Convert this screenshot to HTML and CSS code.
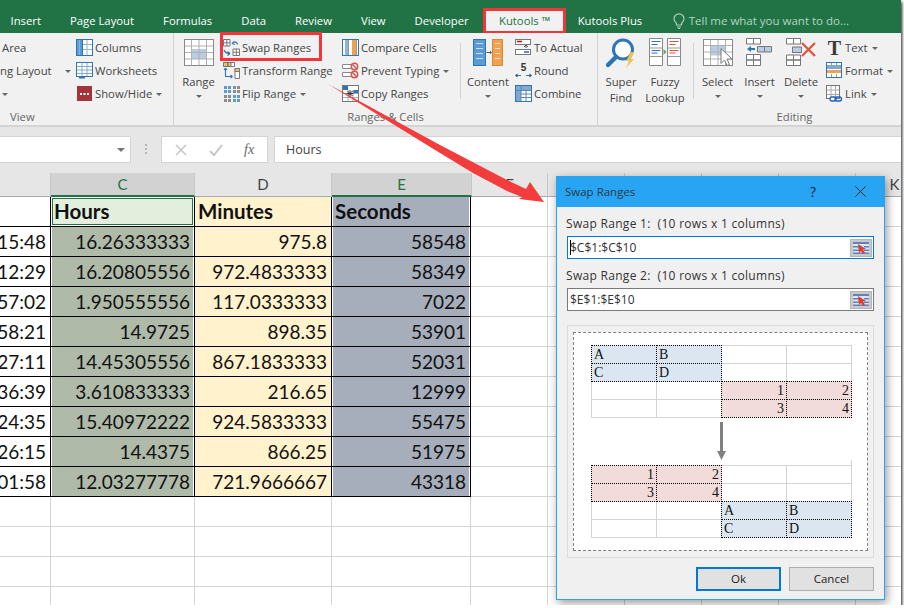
FILE: index.html
```html
<!DOCTYPE html>
<html lang="en">
<head>
  <meta charset="UTF-8">
  <title>Swap Ranges</title>
  <link rel="stylesheet" href="styles.css">
</head>
<body>
<div class="window">

  <!-- tabs -->
  <div class="tabs">
    <span class="tab tab-insert">Insert</span>
    <span class="tab">Page Layout</span>
    <span class="tab">Formulas</span>
    <span class="tab">Data</span>
    <span class="tab">Review</span>
    <span class="tab">View</span>
    <span class="tab">Developer</span>
    <span class="tab tab-active">Kutools ™</span>
    <span class="tab">Kutools Plus</span>
    <span class="tell">
      <svg width="12" height="16" viewBox="0 0 12 16" fill="none" stroke="#a9cdb9" stroke-width="1.2"><path d="M3.5 10.5C2 9 1 8 1 5.8a5 5 0 0 1 10 0C11 8 10 9 8.500 10.500V12h-5zM4 14h4M5 15.500h2"/></svg>
      Tell me what you want to do...
    </span>
  </div>

  <!-- ribbon -->
  <div class="ribbon">
    <div class="group group-view">
      <div class="group-body">
        <div class="col col-cut">
          <div class="row cut-area">Area</div>
          <div class="row cut-layout">ng Layout<i class="caret caret-far"></i></div>
          <div class="row"><i class="caret"></i></div>
        </div>
        <div class="col">
          <div class="row">
            <svg class="ico" viewBox="0 0 17 17"><rect x=".5" y=".5" width="16" height="16" fill="#fff" stroke="#2e75b6"/><rect x=".5" y=".5" width="6" height="16" fill="#5b9bd5" stroke="#2e75b6"/><path d="M11 1v15M7 5.500h9M7 10.500h9M3.500 1v15" stroke="#8fb4d9" fill="none"/></svg>
            Columns
          </div>
          <div class="row">
            <svg class="ico" viewBox="0 0 17 17"><rect x=".5" y=".5" width="16" height="14" fill="#fff" stroke="#2e75b6"/><path d="M1 4.500h15M1 8h15M1 11.500h15M6 1v13M11 1v13" stroke="#7fa9d2" fill="none"/><rect x="3" y="14" width="6" height="2.500" fill="#2e75b6"/></svg>
            Worksheets
          </div>
          <div class="row">
            <svg class="ico" viewBox="0 0 17 17"><rect x="1" y="1" width="15" height="15" fill="#a4343a"/><path d="M4 8h2v2H4zM7.500 8h2v2h-2zM11 8h2v2h-2z" fill="#fff"/></svg>
            Show/Hide<i class="caret"></i>
          </div>
        </div>
      </div>
      <div class="group-label label-view">View</div>
    </div>

    <div class="group group-ranges">
      <div class="group-body">
        <div class="big big-range">
          <svg class="big-ico" width="30" height="27" viewBox="0 0 30 27"><rect x=".5" y=".5" width="29" height="26" fill="#fff" stroke="#888"/><rect x="7.500" y="10" width="15" height="10" fill="#b8cce4"/><path d="M1 7h28M1 13.500h28M1 20h28M7.500 1v25M15 1v25M22.500 1v25" stroke="#b0b0b0" fill="none"/></svg>
          <span>Range</span>
          <i class="caret caret-big"></i>
        </div>
        <div class="col col-transform">
          <div class="row marked">
            <svg class="ico" viewBox="0 0 17 17"><path d="M.5.5h6.500v6.500H.5zM10 10h6.500v6.500H10zM3.800 1v6M1 3.800h6M13.300 10v6M10 13.300h6" fill="#fff" stroke="#777"/><path d="M9 4.500c2.500-2.500 5-1.500 5.500 1M9 4.500l2.500-2M9 4.500l2.800 1M1 11c1 3 3 3.500 6 3.500M7 14.500l-2.500-2M7 14.500l-2.500 2" fill="none" stroke="#2e75b6" stroke-width="1.200"/></svg>
            Swap Ranges
          </div>
          <div class="row">
            <svg class="ico" viewBox="0 0 17 17"><path d="M.5.500h11v4h-11z" fill="#fff" stroke="#777"/><path d="M.5.500h4v4h-4zM5 .5h3v4H5z" fill="#f2c25f" stroke="#777"/><path d="M12 6.500h4.500v10H12z" fill="#fff" stroke="#777"/><path d="M12 6.500h4.500v3H12z" fill="#f2c25f" stroke="#777"/><path d="M2.500 6v8.500h7M2.500 6L1 8M2.500 6L4 8M9.500 14.500L7.500 13M9.500 14.500L7.500 16" fill="none" stroke="#2e75b6" stroke-width="1.100"/></svg>
            Transform Range
          </div>
          <div class="row">
            <svg class="ico" viewBox="0 0 17 17"><g fill="#5b9bd5"><path d="M1 1h3v3H1zM5 1h3v3H5zM1 5h3v3H1zM5 5h3v3H5zM10 10h3v3h-3zM14 10h3v3h-3zM10 14h3v3h-3zM14 14h3v3h-3z"/></g><g fill="#8c8c8c"><path d="M10 1h3v3h-3zM14 1h3v3h-3zM10 5h3v3h-3zM14 5h3v3h-3zM1 10h3v3H1zM5 10h3v3H5zM1 14h3v3H1zM5 14h3v3H5z"/></g></svg>
            Flip Range<i class="caret"></i>
          </div>
        </div>
        <div class="col col-compare">
          <div class="row">
            <svg class="ico" viewBox="0 0 17 17"><rect x=".5" y=".5" width="16" height="16" fill="#fff" stroke="#2e75b6"/><rect x="3" y="1" width="3" height="15" fill="#8fb4e0"/><rect x="10" y="1" width="4" height="15" fill="#eda24f"/><path d="M6.500 1v15M14.500 1v15" stroke="#999"/></svg>
            Compare Cells
          </div>
          <div class="row">
            <svg class="ico" viewBox="0 0 17 17"><path d="M.5 2.500h11v4H.5zM.5 10.500h11v4H.5z" fill="#fff" stroke="#888"/><g fill="#fff" stroke="#d9534f" stroke-width="1.500"><circle cx="12.500" cy="4.500" r="3.200"/><circle cx="12.500" cy="12.500" r="3.200"/><path d="M10.300 2.300l4.400 4.400M10.300 10.300l4.400 4.400"/></g></svg>
            Prevent Typing<i class="caret"></i>
          </div>
          <div class="row">
            <svg class="ico" viewBox="0 0 17 17"><rect x=".5" y=".5" width="16" height="16" fill="#fff" stroke="#777"/><path d="M1 1h5v4H1zM11 5h5v3h-5z" fill="#2e75b6"/><path d="M1 8.500h15M1 12.500h15M6 5v11M11 5v11" stroke="#aaa"/><path d="M8 5v7M4.500 8.500h7M5.500 6l5 5M10.500 6l-5 5" stroke="#333"/></svg>
            Copy Ranges
          </div>
        </div>
        <div class="sep"></div>
        <div class="big big-content">
          <svg class="big-ico" width="30" height="27" viewBox="0 0 30 27"><rect x=".5" y=".5" width="12" height="26" fill="#5b9bd5" stroke="#2e75b6"/><rect x="19.500" y=".5" width="10" height="26" fill="#f0a050" stroke="#d98a30"/><path d="M3 4.500h7M3 9.500h7M3 14.500h7M3 19.500h7M22 4.500h5M22 9.500h5M22 14.500h5M22 19.500h5" stroke="#fff" stroke-opacity=".7"/><path d="M13.500 13.500h4" stroke="#555"/><path d="M19 13.500l-2-1.800v3.600z" fill="#555"/></svg>
          <span>Content</span>
          <i class="caret caret-big"></i>
        </div>
        <div class="col">
          <div class="row">
            <svg class="ico" viewBox="0 0 17 17"><rect x=".5" y=".5" width="15" height="5" fill="#fff" stroke="#777"/><path d="M2 2.500h5" stroke="#c00" stroke-width="1.500"/><rect x=".5" y="10.500" width="15" height="5" fill="#fff" stroke="#777"/><path d="M9 13h5" stroke="#2f5fc4" stroke-width="1.500"/><path d="M11 9V6.500M9 8l2-2 2 2" stroke="#555" fill="none"/></svg>
            To Actual
          </div>
          <div class="row">
            <svg class="ico" viewBox="0 0 17 17"><text x="8.500" y="9" font-family="Liberation Sans" font-size="10" font-weight="700" text-anchor="middle" fill="#333">5</text><path d="M1 13.500h5M11 13.500h5" stroke="#2e75b6" stroke-width="1.200"/><path d="M0 13.500l2.500-2v4zM17 13.500l-2.500-2v4z" fill="#1f4e79"/></svg>
            Round
          </div>
          <div class="row">
            <svg class="ico" viewBox="0 0 17 17"><rect x=".5" y=".5" width="16" height="16" fill="#fff" stroke="#2e75b6"/><path d="M1 1h15v4H1zM1 5h5v11H1z" fill="#7fa9d2"/><path d="M1 5.500h15M6 9h10M6 12.500h10M6 1v15M11 5v11" stroke="#5b88b8"/></svg>
            Combine
          </div>
        </div>
      </div>
      <div class="group-label">Ranges &amp; Cells</div>
    </div>

    <div class="group group-editing">
      <div class="group-body">
        <div class="big big-super">
          <svg class="big-ico" width="30" height="31" viewBox="0 0 30 31"><circle cx="17" cy="12.500" r="9.500" fill="#fff" stroke="#2e75b6" stroke-width="3"/><path d="M10 20L2 28" stroke="#2e75b6" stroke-width="4.500" stroke-linecap="round"/><path d="M25 15l-5 9h3l-3 7 8-9h-3l3-7z" fill="#f0c050"/></svg>
          <span>Super<br>Find</span>
        </div>
        <div class="big big-fuzzy">
          <svg class="big-ico" width="32" height="28" viewBox="0 0 32 28"><path d="M.5.500h13v27H.5zM18.500.500h13v27h-13z" fill="#fff" stroke="#888"/><path d="M1 10h12M1 18.500h12M19 10h12M19 18.500h12" stroke="#999"/><path d="M2.500 3.500h9M2.500 6.500h6M2.500 12.500h9M2.500 15h6" stroke="#2e75b6"/><path d="M20.500 3.500h9M20.500 6.500h6M20.500 12.500h9M20.500 15h6" stroke="#e0503a"/><path d="M14.500 11v6l3-3z" fill="#5aa86a"/></svg>
          <span>Fuzzy<br>Lookup</span>
        </div>
        <div class="sep sep-editing"></div>
        <div class="big big-select">
          <svg class="big-ico" width="30" height="27" viewBox="0 0 30 27"><rect x=".5" y=".5" width="29" height="26" fill="#fff" stroke="#888"/><rect x="7.500" y="6.500" width="15" height="10" fill="#b8cce4"/><path d="M1 6.500h28M1 13h28M1 20h28M7.500 1v25M15 1v25M22.500 1v25" stroke="#b0b0b0" fill="none"/><path d="M18 9.500v15l3.500-3.500 2.500 5.500 2.500-1-2.500-5.500h5z" fill="#fff" stroke="#777"/></svg>
          <span>Select</span>
          <i class="caret caret-big"></i>
        </div>
        <div class="big big-insert">
          <svg class="big-ico" width="27" height="28" viewBox="0 0 27 28"><path d="M.5.500h7v5.500h-7zM7.500.500h7v5.500h-7zM.5 16.500h7v5.500h-7zM7.500 16.500h7v5.500h-7zM.5 22h7v5.500h-7zM7.500 22h7v5.500h-7z" fill="#fff" stroke="#777"/><path d="M11.500 8.500h7v5.500h-7zM18.500 8.500h7v5.500h-7z" fill="#b8cce4" stroke="#777"/><path d="M3 11h6" stroke="#2e75b6" stroke-width="2"/><path d="M1 11l4-3v6z" fill="#2e75b6"/></svg>
          <span>Insert</span>
          <i class="caret caret-big"></i>
        </div>
        <div class="big big-delete">
          <svg class="big-ico" width="31" height="28" viewBox="0 0 31 28"><path d="M.5.500h7v5.500h-7zM7.500.500h7v5.500h-7zM.5 17h7v5h-7zM7.500 17h7v5h-7zM.5 22h7v5.500h-7zM7.500 22h7v5.500h-7z" fill="#fff" stroke="#777"/><path d="M6.500 9h9v5.500h-9z" fill="#b8cce4" stroke="#777"/><path d="M16 5l13 13M29 5L16 18" stroke="#e0503a" stroke-width="2.200"/></svg>
          <span>Delete</span>
          <i class="caret caret-big"></i>
        </div>
        <div class="col col-text">
          <div class="row">
            <svg class="ico" viewBox="0 0 17 17"><text x="8.500" y="15.500" font-family="Liberation Serif" font-size="20" font-weight="700" text-anchor="middle" fill="#3a3a3a">T</text></svg>
            Text<i class="caret"></i>
          </div>
          <div class="row">
            <svg class="ico" viewBox="0 0 17 17"><rect x=".5" y=".5" width="15" height="15" fill="#fff" stroke="#2e75b6"/><rect x="1" y="3" width="14" height="4" fill="#7fa9d2"/><rect x="1" y="8" width="14" height="3" fill="#eda24f"/><path d="M5.500 1v2M10.500 1v2M5.500 12v3M10.500 12v3" stroke="#999"/></svg>
            Format<i class="caret"></i>
          </div>
          <div class="row">
            <svg class="ico" viewBox="0 0 17 17"><rect x=".5" y=".5" width="13" height="13" fill="#fff" stroke="#777"/><path d="M1 5h12M1 9.500h12M5 1v12M9.500 1v12" stroke="#aaa"/><rect x="4" y="12" width="6" height="4" rx="2" fill="#fff" stroke="#1f5fbf" stroke-width="1.300"/><rect x="9" y="12" width="6.500" height="4" rx="2" fill="none" stroke="#1f5fbf" stroke-width="1.300"/></svg>
            Link<i class="caret"></i>
          </div>
        </div>
      </div>
      <div class="group-label label-editing">Editing</div>
    </div>
  </div>

  <!-- formula bar -->
  <div class="formula-bar">
    <div class="name-box"><i class="caret caret-name"></i></div>
    <div class="grip"></div>
    <div class="fx-box">
      <svg width="14" height="14" viewBox="0 0 14 14"><path d="M2 2l10 10M12 2L2 12" stroke="#c6c6c6" stroke-width="1.500"/></svg>
      <svg width="14" height="14" viewBox="0 0 14 14"><path d="M1 8l4 4 8-10" stroke="#c6c6c6" stroke-width="2" fill="none"/></svg>
      <span class="fx">fx</span>
    </div>
    <div class="formula-input">Hours</div>
  </div>

  <!-- column headers -->
  <div class="col-heads">
    <div class="head"></div>
    <div class="head head-on">C</div>
    <div class="head">D</div>
    <div class="head head-on">E</div>
    <div class="head">F</div>
    <div class="head">G</div>
    <div class="head">H</div>
    <div class="head">I</div>
    <div class="head">J</div>
    <div class="head">K</div>
  </div>

  <!-- sheet -->
  <div class="sheet">
    <div class="table">
      <div class="cell line"></div><div class="cell line c-top">Hours</div><div class="cell line d b">Minutes</div><div class="cell line e b">Seconds</div>
      <div class="cell line num">15:48</div><div class="cell line c num">16.26333333</div><div class="cell line d num">975.8</div><div class="cell line e num">58548</div>
      <div class="cell line num">12:29</div><div class="cell line c num">16.20805556</div><div class="cell line d num">972.4833333</div><div class="cell line e num">58349</div>
      <div class="cell line num">57:02</div><div class="cell line c num">1.950555556</div><div class="cell line d num">117.0333333</div><div class="cell line e num">7022</div>
      <div class="cell line num">58:21</div><div class="cell line c num">14.9725</div><div class="cell line d num">898.35</div><div class="cell line e num">53901</div>
      <div class="cell line num">27:11</div><div class="cell line c num">14.45305556</div><div class="cell line d num">867.1833333</div><div class="cell line e num">52031</div>
      <div class="cell line num">36:39</div><div class="cell line c num">3.610833333</div><div class="cell line d num">216.65</div><div class="cell line e num">12999</div>
      <div class="cell line num">24:35</div><div class="cell line c num">15.40972222</div><div class="cell line d num">924.5833333</div><div class="cell line e num">55475</div>
      <div class="cell line num">26:15</div><div class="cell line c num">14.4375</div><div class="cell line d num">866.25</div><div class="cell line e num">51975</div>
      <div class="cell line num">01:58</div><div class="cell line c num">12.03277778</div><div class="cell line d num">721.9666667</div><div class="cell line e num">43318</div>
      <div class="cell"></div><div class="cell"></div><div class="cell"></div><div class="cell"></div>
      <div class="cell"></div><div class="cell"></div><div class="cell"></div><div class="cell"></div>
      <div class="cell"></div><div class="cell"></div><div class="cell"></div><div class="cell"></div>
      <div class="cell"></div><div class="cell"></div><div class="cell"></div><div class="cell"></div>
    </div>
  </div>

  <!-- red arrow from the ribbon to the dialog -->
  <svg class="pointer" width="904" height="608" viewBox="0 0 904 608"><path d="M328 84L440 145L507 180L526 189L530 182L544 202L519 199L522 197L507 191L473 173L440 153z" fill="#f33c3c"/></svg>

  <!-- dialog -->
  <div class="dialog">
    <div class="dlg-title">
      <span class="dlg-name">Swap Ranges</span>
      <span class="dlg-help">?</span>
      <svg class="dlg-close" width="11" height="11" viewBox="0 0 11 11"><path d="M.5.500l10 10M10.500.500l-10 10" stroke="#222"/></svg>
    </div>
    <div class="dlg-body">
      <div class="field-label">Swap Range 1:&nbsp;&nbsp;(10 rows x 1 columns)</div>
      <div class="field field-on">
        <span class="field-text"><i class="text-caret"></i>$C$1:$C$10</span>
        <span class="picker"><svg width="16" height="12" viewBox="0 0 16 12"><rect width="16" height="12" fill="#dfe5f0"/><path d="M0 0h16v2H0zM0 4h6v1.500H0zM11 4h5v1.500h-5zM0 7.500h6V9H0zM11 7.500h5V9h-5zM0 10.500h16V12H0z" fill="#5f82c0"/><path d="M5 2l8 5-3 .6 2 3-2 1.400-2-3-2 2z" fill="#d8402f"/></svg></span>
      </div>
      <div class="field-label">Swap Range 2:&nbsp;&nbsp;(10 rows x 1 columns)</div>
      <div class="field">
        <span class="field-text">$E$1:$E$10</span>
        <span class="picker"><svg width="16" height="12" viewBox="0 0 16 12"><rect width="16" height="12" fill="#dfe5f0"/><path d="M0 0h16v2H0zM0 4h6v1.500H0zM11 4h5v1.500h-5zM0 7.500h6V9H0zM11 7.500h5V9h-5zM0 10.500h16V12H0z" fill="#5f82c0"/><path d="M5 2l8 5-3 .6 2 3-2 1.400-2-3-2 2z" fill="#d8402f"/></svg></span>
      </div>
      <div class="preview">
        <div class="preview-inner">
          <div class="pv-table">
            <div class="pv pv-blue">A</div><div class="pv pv-blue">B</div><div class="pv"></div><div class="pv"></div>
            <div class="pv pv-blue">C</div><div class="pv pv-blue">D</div><div class="pv"></div><div class="pv"></div>
            <div class="pv"></div><div class="pv"></div><div class="pv pv-red">1</div><div class="pv pv-red">2</div>
            <div class="pv"></div><div class="pv"></div><div class="pv pv-red">3</div><div class="pv pv-red">4</div>
          </div>
          <svg class="pv-arrow" width="261" height="48" viewBox="0 0 261 48"><path d="M129 5h3v29h-3z" fill="#808080"/><path d="M126 34h9l-4.500 9z" fill="#808080"/><path d="M260.500 43v5" stroke="#d4d4d4"/></svg>
          <div class="pv-table">
            <div class="pv pv-red">1</div><div class="pv pv-red">2</div><div class="pv"></div><div class="pv"></div>
            <div class="pv pv-red">3</div><div class="pv pv-red">4</div><div class="pv"></div><div class="pv"></div>
            <div class="pv"></div><div class="pv"></div><div class="pv pv-blue">A</div><div class="pv pv-blue">B</div>
            <div class="pv"></div><div class="pv"></div><div class="pv pv-blue">C</div><div class="pv pv-blue">D</div>
          </div>
        </div>
      </div>
      <div class="dlg-buttons">
        <div class="btn btn-main">Ok</div>
        <div class="btn">Cancel</div>
      </div>
    </div>
  </div>

</div>
</body>
</html>
```

FILE: styles.css
```css
body {
  margin: 0;
  background: #fff;
  overflow: hidden;
  font-family: "Open Sans", "Liberation Sans", sans-serif;
}
.window {
  position: relative;
  width: 901px;
  height: 605px;
  overflow: hidden;
  background: #fff;
  box-shadow: 1px 2px 3px rgba(0, 0, 0, 0.9);
}

/* tabs */
.tabs {
  display: flex;
  height: 33px;
  margin-left: -4px;
  background: #217346;
  color: #fff;
  font-size: 11.3px;
  line-height: 41px;
}
.tab {
  padding: 0 14.5px;
  white-space: nowrap;
}
.tab-active {
  box-sizing: border-box;
  width: 83px;
  height: 25px;
  margin: 8px -3px 0 0;
  padding: 0;
  border: 3px solid #f0353b;
  border-bottom-width: 2px;
  background: #f1f1f1;
  color: #217346;
  line-height: 20px;
  text-align: center;
}
.tell {
  display: flex;
  align-items: center;
  gap: 4px;
  margin-left: 16px;
  padding-top: 8px;
  color: #b5d4c3;
  font-size: 11.5px;
  line-height: 16px;
  white-space: nowrap;
}

/* ribbon */
.ribbon {
  display: flex;
  height: 92px;
  background: #f1f1f1;
  border-bottom: 2px solid #d4d4d4;
  color: #444;
  font-size: 11.3px;
}
.group {
  position: relative;
  flex: none;
  display: flex;
  flex-direction: column;
}
.group-view {
  width: 173px;
  border-right: 1px solid #d2d2d2;
}
.group-ranges {
  width: 423px;
  border-right: 1px solid #d2d2d2;
}
.group-editing {
  width: 303px;
}
.group-body {
  flex: none;
  display: flex;
  height: 73px;
  padding-top: 3px;
}
.group-label {
  color: #666;
  line-height: 16px;
  text-align: center;
}
.label-view {
  padding-left: 10px;
  text-align: left;
}
.label-editing {
  padding-left: 90px;
}
.col {
  flex: none;
}
.col-cut {
  width: 76px;
  overflow: hidden;
}
.cut-area {
  padding-left: 2px;
}
.col-transform {
  width: 119px;
}
.col-compare {
  width: 118px;
}
.col-text {
  margin-left: 2px;
}
.row {
  display: flex;
  align-items: center;
  gap: 2px;
  height: 23px;
  white-space: nowrap;
}
.ico {
  flex: none;
  width: 17px;
  height: 17px;
  overflow: visible;
}
.marked {
  position: relative;
  width: 93px;
}
.marked::after {
  content: "";
  position: absolute;
  top: -4px;
  right: -6px;
  bottom: -2px;
  left: -3px;
  border: 3px solid #f0353b;
}
.caret {
  flex: none;
  width: 0;
  height: 0;
  margin: 2px 0 0 2px;
  border: 3px solid transparent;
  border-top: 3px solid #666;
  border-bottom: 0;
}
.caret-far {
  margin-left: 11px;
}
.caret-big {
  margin: 5px 0 0;
}
.big {
  flex: none;
  display: flex;
  flex-direction: column;
  align-items: center;
  line-height: 16px;
  text-align: center;
}
.big-ico {
  flex: none;
  height: 27px;
  margin: 3px 0 8px;
}
.big-range {
  width: 49px;
}
.big-content {
  width: 54px;
}
.big-super {
  width: 46px;
}
.big-super .big-ico {
  height: 31px;
  margin: 1px 0 6px;
}
.big-fuzzy {
  width: 42px;
}
.big-fuzzy .big-ico {
  height: 28px;
  margin: 2px 0 8px;
}
.big-select {
  width: 47px;
}
.big-insert {
  width: 37px;
}
.big-insert .big-ico {
  height: 28px;
  margin: 2px 0 8px;
}
.big-delete {
  width: 46px;
}
.big-delete .big-ico {
  height: 28px;
  margin: 2px 0 8px;
}
.sep {
  flex: none;
  width: 1px;
  height: 56px;
  margin-top: 7px;
  background: #d2d2d2;
}
.sep-editing {
  margin-left: 7px;
}

/* formula bar */
.formula-bar {
  display: flex;
  height: 27px;
  padding: 9px 0 10px;
  background: #e6e6e6;
}
.name-box {
  box-sizing: border-box;
  display: flex;
  align-items: center;
  justify-content: flex-end;
  width: 131px;
  padding-right: 5px;
  background: #fff;
  border: 1px solid #d4d4d4;
  border-left: 0;
}
.caret-name {
  margin: 0;
  border-width: 4px;
  border-top-color: #777;
  border-bottom: 0;
}
.grip {
  width: 2px;
  height: 11px;
  margin: 8px 14px 0;
  background: repeating-linear-gradient(#b4b4b4 0 2px, transparent 2px 4px);
}
.fx-box {
  box-sizing: border-box;
  display: flex;
  align-items: center;
  gap: 21px;
  width: 107px;
  padding-left: 12px;
  background: #fff;
  border: 1px solid #d4d4d4;
}
.fx {
  color: #666;
  font-family: "Liberation Serif", serif;
  font-size: 14px;
  font-style: italic;
}
.formula-input {
  box-sizing: border-box;
  flex: 1;
  margin-left: 6px;
  padding-left: 11px;
  background: #fff;
  border: 1px solid #d4d4d4;
  border-right: 0;
  color: #444;
  font-size: 12.500px;
  line-height: 25px;
}

/* column headers */
.col-heads {
  display: grid;
  grid-template-columns: 51px 144px 137px 140px 76px 77px 77px 77px 77px 78px;
  height: 24px;
  background: #e6e6e6;
}
.head {
  box-sizing: border-box;
  border-right: 1px solid #c6c6c6;
  border-bottom: 1px solid #aaa;
  color: #444;
  font-family: Lato, "Liberation Sans", sans-serif;
  font-size: 15px;
  line-height: 22px;
  text-align: center;
  white-space: nowrap;
}
.head-on {
  background: #d2d2d2;
  border-bottom: 2px solid #217346;
  color: #217346;
}

/* sheet */
.sheet {
  height: 409px;
  background-color: #fff;
  background-image:
    linear-gradient(#d4d4d4 1px, transparent 1px),
    linear-gradient(90deg, #d4d4d4 1px, transparent 1px);
  background-position: 0 -1px, 547px 0;
  background-size: 100% 30px, 77px 100%;
}
.table {
  display: grid;
  grid-template-columns: 51px 144px 137px 139px;
  grid-auto-rows: 30px;
  width: 471px;
  color: #111;
  font-family: Lato, "Liberation Sans", sans-serif;
  font-size: 19px;
  line-height: 29px;
}
.cell {
  box-sizing: border-box;
  overflow: hidden;
  padding: 0 4px;
  background: #fff;
  border-right: 1px solid #d4d4d4;
  border-bottom: 1px solid #d4d4d4;
  white-space: nowrap;
}
.line {
  border-color: #000;
}
.num {
  display: flex;
  justify-content: flex-end;
}
.b,
.c-top {
  padding-left: 3px;
  font-size: 20.5px;
  font-weight: 700;
}
.c {
  background: #afbaa9;
  box-shadow: inset 1px 0 #fff, inset -1px 0 #fff;
}
.c-top {
  background: #e3eedc;
  box-shadow: inset 0 0 0 1px #fff, inset 0 0 0 2px #217346;
}
.d {
  background: #fff2cc;
}
.e {
  background: #a6adbb;
  box-shadow: inset 1px 0 #fff, inset -1px 0 #fff;
}

.pointer {
  position: absolute;
  top: 0;
  left: 0;
  pointer-events: none;
}

/* dialog */
.dialog {
  position: absolute;
  top: 176px;
  left: 556px;
  box-sizing: border-box;
  width: 329px;
  height: 424px;
  background: #f0f0f0;
  border: 1px solid #29a3f3;
  box-shadow: 2px 3px 9px rgba(0, 0, 0, 0.4);
  color: #333;
  font-size: 11.5px;
}
.dlg-title {
  display: flex;
  align-items: center;
  height: 29px;
  padding: 0 0 1px 8px;
  background: #27a5f3;
}
.dlg-name {
  flex: 1;
  color: #2b3a44;
}
.dlg-help {
  color: #222;
  font-size: 14px;
}
.dlg-close {
  margin: 0 18px 0 39px;
}
.dlg-body {
  padding: 9px 10px 0;
}
.field-label {
  height: 15px;
  margin-left: -1px;
  font-size: 12px;
  letter-spacing: 0.3px;
  line-height: 15px;
  white-space: nowrap;
}
.field {
  box-sizing: border-box;
  display: flex;
  align-items: center;
  justify-content: space-between;
  height: 23px;
  margin: 5px 0 9px;
  padding: 0 1px 0 2px;
  background: #fff;
  border: 1px solid #7a7a7a;
  font-size: 12px;
}
.field-on {
  border-color: #0078d7;
}
.field-text {
  position: relative;
}
.text-caret {
  position: absolute;
  top: 1px;
  bottom: 1px;
  left: 0;
  width: 1px;
  background: #000;
}
.picker {
  box-sizing: border-box;
  display: flex;
  align-items: center;
  justify-content: center;
  width: 22px;
  height: 18px;
  background: #c9c9c9;
  border: 1px solid #b5b5b5;
}
.preview {
  box-sizing: border-box;
  height: 233px;
  margin-top: 14px;
  padding: 6px 5px;
  border: 1px solid #dcdcdc;
}
.preview-inner {
  box-sizing: border-box;
  height: 219px;
  padding: 12px 0 0 17px;
  background: #fff;
  border: 1px dashed #808080;
}
.pv-table {
  display: grid;
  grid-template-columns: repeat(4, 65px);
  grid-auto-rows: 18px;
  width: 261px;
  color: #111;
  font-family: "Liberation Serif", serif;
  font-size: 14px;
  line-height: 18px;
}
.pv {
  box-sizing: border-box;
  height: 19px;
  margin-right: -1px;
  padding: 0 2px;
  border: 1px solid #d4d4d4;
  background: #fff;
}
.pv-blue,
.pv-red {
  position: relative;
  z-index: 1;
  border: 1px dotted #000;
}
.pv-blue {
  background: #dce6f1;
}
.pv-red {
  background: #f2dcdb;
  text-align: right;
}
.pv-arrow {
  display: block;
}
.dlg-buttons {
  display: flex;
  justify-content: flex-end;
  gap: 8px;
  margin-top: 9px;
}
.btn {
  box-sizing: border-box;
  width: 85px;
  height: 24px;
  background: #e1e1e1;
  border: 1px solid #adadad;
  color: #222;
  line-height: 22px;
  text-align: center;
}
.btn-main {
  border: 2px solid #0078d7;
  line-height: 20px;
}
```
